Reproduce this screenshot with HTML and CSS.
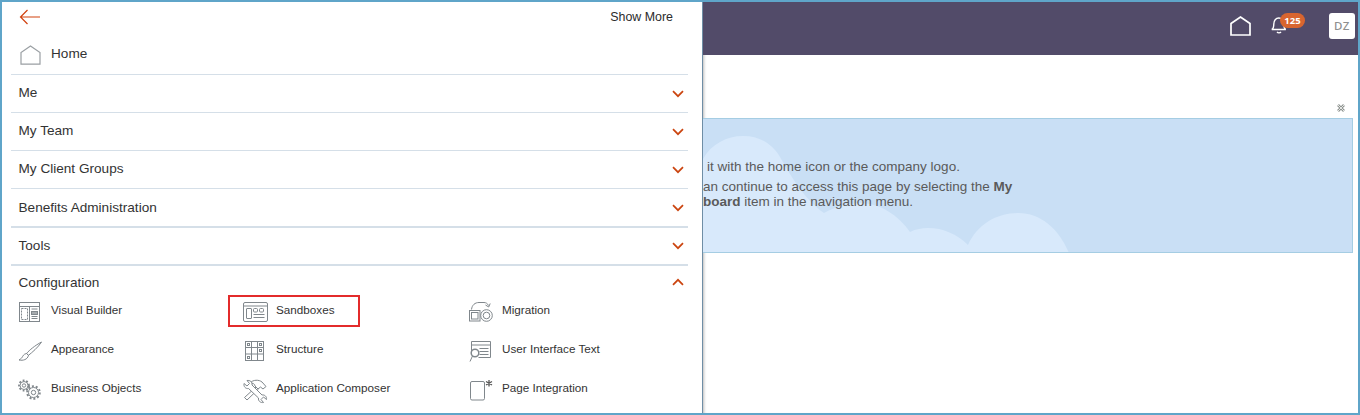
FILE: index.html
```html
<!DOCTYPE html>
<html lang="en">
<head>
<meta charset="utf-8">
<title>Navigator</title>
<link rel="stylesheet" href="styles.css">
</head>
<body>
<div class="frame">
  <aside class="nav">
    <div class="nav-top">
      <svg class="back" width="24" height="16" viewBox="0 0 24 16"><path d="M21 8H1.500M8.500 1l-7 7 7 7" fill="none" stroke="#d1420f" stroke-width="1.200"/></svg>
      <span class="more">Show More</span>
    </div>
    <div class="home-row">
      <svg width="21" height="20" viewBox="0 0 21 20"><path d="M1 19.200V7.600L10.500 1 20 7.600v11.600z" fill="none" stroke="#9a9fa3" stroke-width="1.200"/></svg>
      <span>Home</span>
    </div>
    <div class="row"><span>Me</span><svg class="chev" width="12" height="8" viewBox="0 0 12 8"><path d="m1 1.200 5 5 5-5" fill="none" stroke="#cb4510" stroke-width="1.700"/></svg></div>
    <div class="row"><span>My Team</span><svg class="chev" width="12" height="8" viewBox="0 0 12 8"><path d="m1 1.200 5 5 5-5" fill="none" stroke="#cb4510" stroke-width="1.700"/></svg></div>
    <div class="row"><span>My Client Groups</span><svg class="chev" width="12" height="8" viewBox="0 0 12 8"><path d="m1 1.200 5 5 5-5" fill="none" stroke="#cb4510" stroke-width="1.700"/></svg></div>
    <div class="row row-tall"><span>Benefits Administration</span><svg class="chev" width="12" height="8" viewBox="0 0 12 8"><path d="m1 1.200 5 5 5-5" fill="none" stroke="#cb4510" stroke-width="1.700"/></svg></div>
    <div class="row row-thick"><span>Tools</span><svg class="chev" width="12" height="8" viewBox="0 0 12 8"><path d="m1 1.200 5 5 5-5" fill="none" stroke="#cb4510" stroke-width="1.700"/></svg></div>
    <div class="row row-open"><span>Configuration</span><svg class="chev" width="12" height="8" viewBox="0 0 12 8"><path d="m1 6.800 5-5 5 5" fill="none" stroke="#cb4510" stroke-width="1.700"/></svg></div>
    <div class="grid">
      <div class="item">
        <svg class="ico" width="26" height="24" viewBox="0 0 26 24"><rect x="1.500" y="1.500" width="20" height="19"/><path d="M1.500 5.500h20M11.500 5.500v15"/><rect x="3.500" y="7.500" width="6" height="11" stroke-dasharray="2 1"/><path d="M13.500 8h6M13.500 17.500h6M13.500 15.500h6"/><rect x="13.500" y="10.500" width="6" height="3" fill="#a6abaf"/></svg>
        <span>Visual Builder</span>
      </div>
      <div class="item item-boxed">
        <svg class="ico" width="26" height="24" viewBox="0 0 26 24"><rect x=".5" y="1.500" width="24" height="19" rx="1.500"/><path d="M.5 5h24"/><rect x="3.500" y="7.500" width="5" height="10" rx=".5"/><rect x="10.500" y="7.500" width="4" height="3.500" rx="1"/><rect x="16.500" y="7.500" width="4" height="3.500" rx="1"/><path d="M10.500 13.500h11M10.500 16.500h11"/></svg>
        <span>Sandboxes</span>
      </div>
      <div class="item">
        <svg class="ico" width="26" height="24" viewBox="0 0 26 24"><rect x=".5" y="9.500" width="10.500" height="10.500"/><rect x="2.500" y="11.500" width="6.500" height="6.500"/><circle cx="17.500" cy="14.500" r="5.800"/><circle cx="17.500" cy="14.500" r="3.300"/><path d="M2.500 8.500C3 4 6 1.500 10 1.500h5c2 0 3.500 1 4.500 3"/><path d="m16.500 4 3.200 2 1.500-3.500"/></svg>
        <span>Migration</span>
      </div>
      <div class="item">
        <svg class="ico" width="26" height="24" viewBox="0 0 26 24"><path d="M23.500 2C17 5.500 11.500 10 8.500 13.500l2 1.800C14 12.500 20 7.500 23.500 2z"/><path d="M8.500 13.500c-3 .5-3.500 2.500-4.500 4-.5.8-1.500 1.500-3 2.500 4 .8 8.500-.3 9.500-4.700z"/></svg>
        <span>Appearance</span>
      </div>
      <div class="item">
        <svg class="ico" width="26" height="24" viewBox="0 0 26 24"><rect x="2.500" y="1.500" width="18" height="19"/><path d="M8.500 1.500v19M14.500 1.500v19M2.500 7.500h18M2.500 14h18"/><rect x="4.500" y="3.500" width="2" height="2"/><rect x="16.500" y="3.500" width="2" height="2"/><rect x="16.500" y="9.500" width="2" height="2"/><rect x="4.500" y="16.500" width="2" height="2"/></svg>
        <span>Structure</span>
      </div>
      <div class="item">
        <svg class="ico" width="26" height="24" viewBox="0 0 26 24"><path d="M2.500 11V1.500h19v16H9.500"/><path d="M2.500 5h19M10.500 8.500h9M10.500 11.500h9M10.500 14.500h9"/><circle cx="6" cy="13" r="3.800" stroke-width="1.500" fill="#fff"/><path d="M3.500 16 1 21.500"/></svg>
        <span>User Interface Text</span>
      </div>
      <div class="item">
        <svg class="ico" width="26" height="24" viewBox="0 0 26 24"><circle cx="6" cy="6.500" r="5" stroke-width="1.800" stroke-dasharray="1.800 1.800"/><circle cx="6" cy="6.500" r="4" fill="#fff"/><circle cx="6" cy="6.500" r="1.700"/><circle cx="15.500" cy="13.500" r="6.300" stroke-width="2" stroke-dasharray="2 1.900"/><circle cx="15.500" cy="13.500" r="5" fill="#fff"/><circle cx="15.500" cy="13.500" r="2.200"/></svg>
        <span>Business Objects</span>
      </div>
      <div class="item">
        <svg class="ico" width="26" height="24" viewBox="0 0 26 24"><path d="M7 4c3-3.500 9-3.500 12-1l4 4.500-3 2.500-2.500-2-2.500 2-3-3c0-2-2-3-5-3z"/><path d="M13 8 1.500 18.500 4 21l11.500-11"/><path fill="#fff" d="m1 4.500 3 2.500L6.500 4.500 4 1.500c3-.5 5.500 1.500 5 4.500l10 10c2.500-.5 5 1.500 4.500 4.500l-3-2.500-2.500 2.500 2.500 3c-3 .5-5.500-1.500-5-4.500L5.500 9.500c-3 .5-5-2-4.500-5z"/></svg>
        <span>Application Composer</span>
      </div>
      <div class="item">
        <svg class="ico" width="26" height="24" viewBox="0 0 26 24"><rect x="1.500" y="2.500" width="14" height="18.500" rx="1.500"/><path class="star" d="M20 1v6.500M17 2.500l6 3.500M23 2.500 17 6"/></svg>
        <span>Page Integration</span>
      </div>
    </div>
  </aside>
  <main class="page">
    <header class="bar">
      <svg width="21" height="20" viewBox="0 0 21 20"><path d="M1 19V7.500L10.500 1 20 7.500V19z" fill="none" stroke="#fff" stroke-width="1.700"/></svg>
      <div class="bell">
        <svg width="16" height="18" viewBox="0 2 16 18"><path d="M.8 14.500c2-1 2-3 2-5.500 0-3.500 2-6 5-6s5 2.500 5 6c0 2.500 0 4.500 2 5.500zM6 17c1 1.200 3 1.200 4 0" fill="none" stroke="#fff" stroke-width="1.400"/></svg>
        <span class="badge">125</span>
      </div>
      <span class="avatar">DZ</span>
    </header>
    <div class="content">
      <svg class="close" width="8" height="8" viewBox="0 0 8 8"><path d="m1 1 6 6M7 1 1 7" stroke="#8f9491" stroke-width="2.600"/><path d="m1 1 6 6M7 1 1 7" stroke="#e4e6e4" stroke-width="1"/></svg>
      <section class="banner">
        <svg class="clouds" width="380" height="134" viewBox="0 0 380 134"><path fill="#d8e9fb" d="M0 134V40C8 25 24 17 40 17c18 0 30 9 37 21 7 12 23 42 44 56 11-6 24-10 36-10 20 0 38 12 50 29 6-3 12-4 18-4 15 0 29 6 40 17 9-20 28-32 50-32 23 0 41 16 51 40z"/></svg>
        <div class="msg">
          <p class="line-first">it with the home icon or the company logo.</p>
          <p class="line-second">an continue to access this page by selecting the <b>My</b><br><b>board</b> item in the navigation menu.</p>
        </div>
      </section>
    </div>
  </main>
</div>
</body>
</html>
```
FILE: styles.css
```css
* { box-sizing: border-box; }
html, body { margin: 0; height: 100%; }
body { font-family: "Liberation Sans", Arial, sans-serif; background: #fff; overflow: hidden; }
.frame { width: 1360px; height: 415px; display: flex; border: 2px solid #5fa5c9; overflow: hidden; }
.nav { width: 701px; flex: none; background: #fff; border-right: 1px solid #6f8ea6; padding: 0 14px 0 9px; color: #333; }
.nav-top { height: 30px; display: flex; justify-content: space-between; align-items: flex-start; padding: 7px 15px 0 8px; }
.back { display: block; }
.more { font-size: 12.4px; line-height: 14px; margin-top: 1px; color: #2b2b2b; }
.home-row { height: 43px; display: flex; align-items: flex-start; gap: 10px; padding: 13px 0 0 9px; font-size: 13.6px; border-bottom: 1px solid #d5dfe8; }
.home-row span { line-height: 16px; margin-top: 1px; }
.row { display: flex; justify-content: space-between; align-items: center; font-size: 13.6px; padding: 0 4px 2px 7.5px; height: 38px; border-bottom: 1px solid #d5dfe8; }
.row-tall { height: 39px; padding-bottom: 1px; border-bottom-width: 2px; }
.row-thick { border-bottom-width: 2px; }
.row-open { height: 25px; border-bottom: 0; padding-top: 7px; padding-bottom: 0; }
.chev { display: block; margin-top: 2px; }
.row-open .chev { margin-top: 0; }
.grid { display: grid; grid-template-columns: 225px 226px 1fr; grid-auto-rows: 39px; padding-left: 7px; font-size: 11.7px; color: #333; }
.item { display: flex; align-items: center; height: 39px; }
.item span { margin-top: -2px; }
.ico { flex: none; align-self: flex-start; margin: 10px 7px 0 0; fill: none; stroke: #80878c; stroke-width: 1; overflow: visible; }
.star { stroke: #555; stroke-width: 1.300; }
.item-boxed { position: relative; }
.item-boxed::before { content: ""; box-sizing: border-box; position: absolute; left: -15px; top: 4px; width: 132px; height: 32px; border: 2px solid #e32b2b; }
.page { flex: 1; display: flex; flex-direction: column; min-width: 0; box-shadow: inset 3px 0 3px -2px #bbb; }
.bar { height: 53px; background: #524b69; display: flex; justify-content: flex-end; align-items: center; gap: 20px; padding: 0 3px 5px 0; }
.bell { position: relative; width: 34px; height: 22px; margin-bottom: 4px; display: flex; align-items: flex-end; }
.badge { position: absolute; left: 9px; top: 0; width: 25px; height: 15px; border-radius: 8px; background: #d8652f; color: #fff; font-size: 9.500px; font-weight: 700; line-height: 15px; text-align: center; font-family: "Noto Sans", sans-serif; }
.avatar { width: 26px; height: 26px; margin-left: 4px; border-radius: 3px; background: #fff; color: #8f8f8f; font-size: 11.500px; font-weight: 500; line-height: 26px; text-align: center; letter-spacing: .6px; font-family: "Noto Sans", sans-serif; }
.content { flex: 1; padding: 49px 5px 0 0; position: relative; }
.close { position: absolute; right: 13px; top: 49px; display: block; }
.banner { position: relative; height: 135px; margin-top: 14px; background: #c9dff5; border: 1px solid #a5cde3; border-left: 0; font-size: 13.5px; color: #5a5a5a; overflow: hidden; }
.clouds { position: absolute; left: 0; top: 0; display: block; }
.msg { position: relative; padding-top: 40px; }
.msg p { margin: 0; line-height: 15px; }
.line-first { padding-left: 4px; }
.msg .line-second { margin-top: 5px; }
```
